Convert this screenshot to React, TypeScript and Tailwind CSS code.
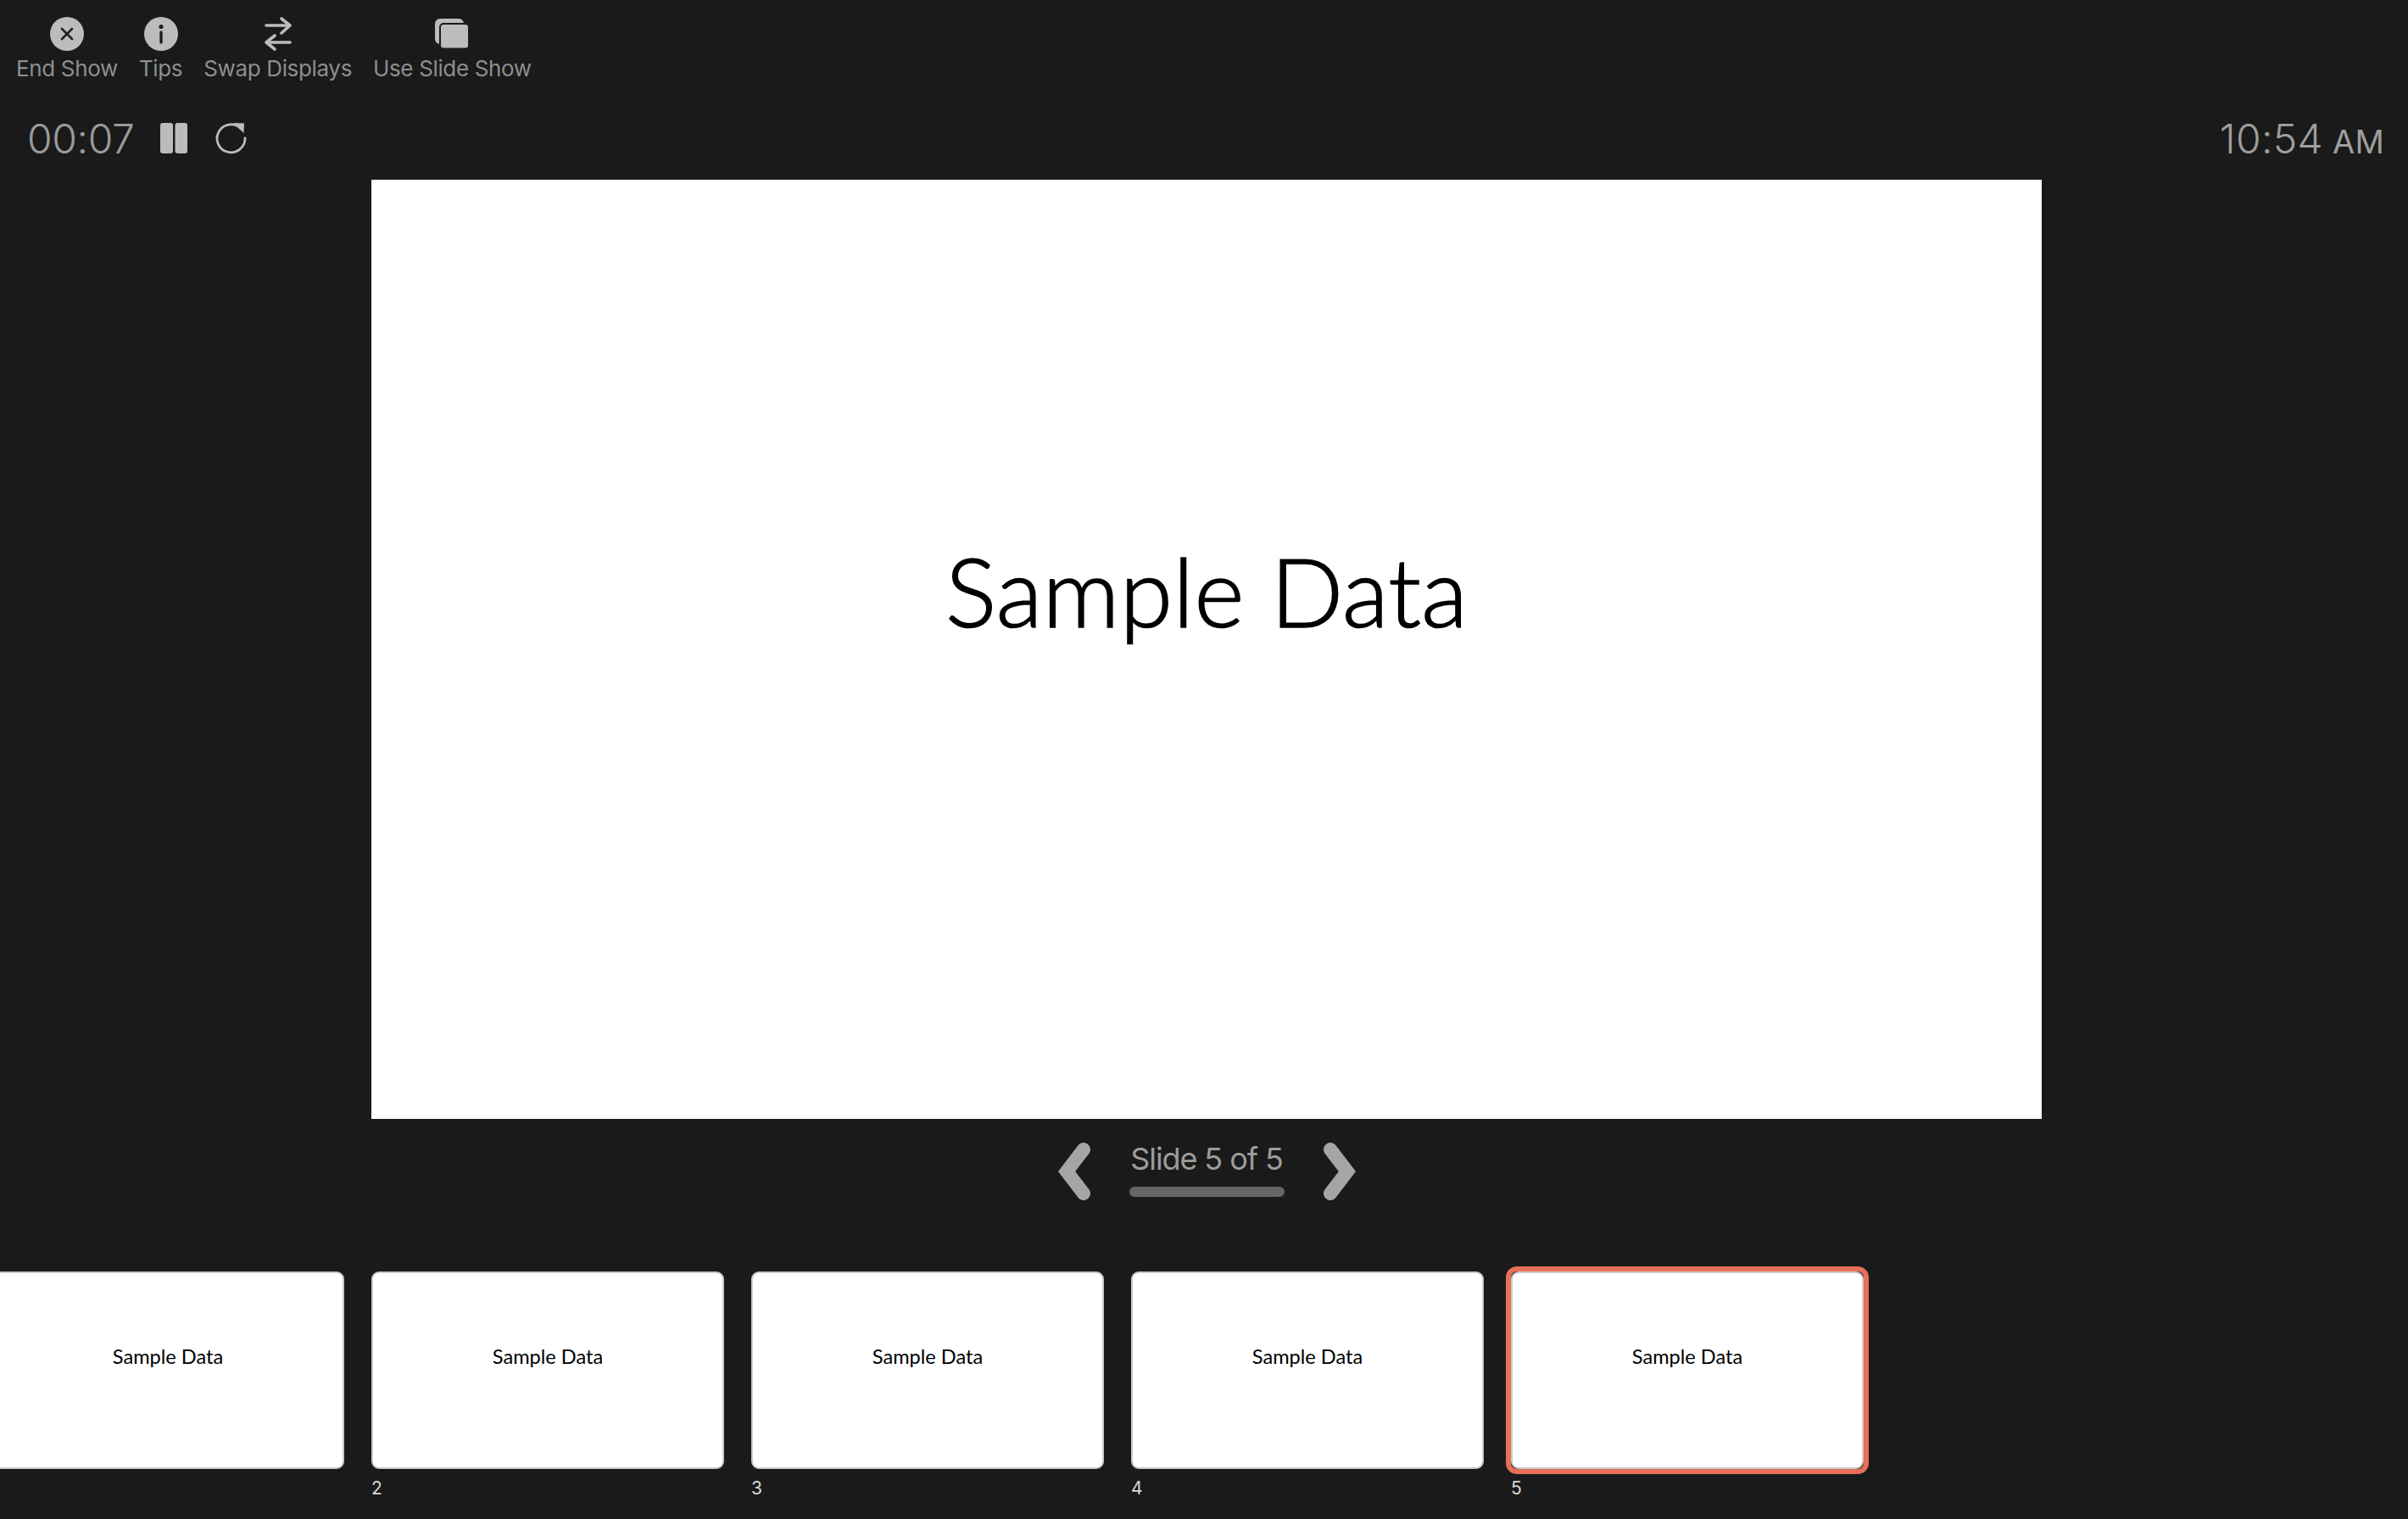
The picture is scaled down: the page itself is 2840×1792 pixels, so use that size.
const Thumb = ({ n, active }: { n?: number; active?: boolean }) => (
  <div className="w-[416px] shrink-0">
    <div className="relative h-[233px] bg-white border-2 border-[#cbcbcb] rounded-[9px] flex items-center justify-center">
      <span className="font-['Lato',sans-serif] text-[23.6px] leading-none text-black mb-[31px]">Sample Data</span>
      {active && <div className="absolute -inset-x-[8px] -inset-y-[8px] border-[6.5px] border-[#e8705a] rounded-[13px]" />}
    </div>
    <div className="mt-[9px] h-[30px] font-['Inter',sans-serif] text-[21px] leading-[28px] text-[#d8d8d8]">{n}</div>
  </div>
);

const ToolItem = ({ label, icon }: { label: string; icon: React.ReactNode }) => (
  <div className="flex flex-col items-center">
    <div className="h-[40px] flex items-center justify-center">{icon}</div>
    <span className="mt-[5px] font-['Inter',sans-serif] text-[26px] leading-[32px] tracking-[-0.35px] text-[#8e8e8e] whitespace-nowrap">{label}</span>
  </div>
);

const Chevron = ({ right }: { right?: boolean }) => (
  <svg width="38" height="68" viewBox="0 0 38 68" className={right ? "rotate-180" : ""}>
    <path d="M30 8 L10 34 L30 60" fill="none" stroke="#a5a5a5" strokeWidth="16" strokeLinecap="round" strokeLinejoin="miter" />
  </svg>
);

export default function App() {
  return (
    <div className="w-[2840px] h-[1792px] bg-[#1a1a1a] overflow-hidden flex flex-col">
      <div className="flex items-start gap-[25px] pl-[19px] pt-[20px] h-[125px]">
        <ToolItem
          label="End Show"
          icon={
            <svg width="40" height="40" viewBox="0 0 40 40">
              <circle cx="20" cy="20" r="20" fill="#bcbcbc" />
              <path d="M14 14 L26 26 M26 14 L14 26" stroke="#1f1f1f" strokeWidth="2.6" strokeLinecap="round" />
            </svg>
          }
        />
        <ToolItem
          label="Tips"
          icon={
            <svg width="40" height="40" viewBox="0 0 40 40">
              <circle cx="20" cy="20" r="20" fill="#bcbcbc" />
              <circle cx="20" cy="11.5" r="2.6" fill="#1f1f1f" />
              <path d="M20 18 V30" stroke="#1f1f1f" strokeWidth="3.4" strokeLinecap="round" />
            </svg>
          }
        />
        <ToolItem
          label="Swap Displays"
          icon={
            <svg width="32" height="40" viewBox="0 0 32 40">
              <path d="M2 10 H29 M20 2 L30 10 L20 19 M30 30 H3 M12 22 L2 30 L12 38" fill="none" stroke="#bcbcbc" strokeWidth="3.6" strokeLinecap="round" strokeLinejoin="round" />
            </svg>
          }
        />
        <ToolItem
          label="Use Slide Show"
          icon={
            <svg width="40" height="36" viewBox="0 0 40 36">
              <rect x="0" y="0" width="34" height="30" rx="6" fill="#bcbcbc" />
              <rect x="6" y="6" width="34" height="29.5" rx="4" fill="#bcbcbc" stroke="#1a1a1a" strokeWidth="2" />
            </svg>
          }
        />
      </div>

      <div className="flex items-center justify-between h-[87px] pl-[32px] pr-[28px] pb-[12px]">
        <div className="flex items-center">
          <span className="font-['Inter',sans-serif] text-[48px] font-light leading-none tracking-[-0.4px] text-[#9b9b9b] w-[157px] pt-[3px]">00:07</span>
          <svg width="32" height="36" viewBox="0 0 32 36">
            <rect x="0" y="0" width="15" height="36" rx="3" fill="#bcbcbc" />
            <rect x="17.5" y="0" width="14.5" height="36" rx="3" fill="#bcbcbc" />
          </svg>
          <svg width="38" height="38" viewBox="0 0 38 38" className="ml-[33px]">
            <path d="M31 8.5 A16.5 16.5 0 1 0 35 19" fill="none" stroke="#bcbcbc" strokeWidth="2.8" strokeLinecap="round" />
            <path d="M21 1 L34 1.5 L33.5 13 Z" fill="#bcbcbc" />
          </svg>
        </div>
        <div className="font-['Inter',sans-serif] text-[#9e9e9e] flex items-baseline gap-[11px] leading-none pt-[3px]">
          <span className="font-light text-[48px] tracking-[0.3px]">10:54</span>
          <span className="text-[38px] tracking-[0.2px]">AM</span>
        </div>
      </div>

      <div className="ml-[438px] w-[1970px]">
        <div className="h-[1108px] bg-white flex items-center justify-center">
          <span className="font-['Lato',sans-serif] font-light text-[113px] tracking-[0.2px] leading-none text-black mb-[140px] [-webkit-text-stroke:1.6px_black]">Sample Data</span>
        </div>
        <div className="flex justify-center gap-[46px] pt-[28px] h-[180px] items-start">
          <Chevron />
          <div className="flex flex-col items-center w-[183px]">
            <span className="font-['Inter',sans-serif] text-[36px] leading-[44px] tracking-[-1.1px] text-[#9c9c9c] whitespace-nowrap mt-[-3px]">Slide 5 of 5</span>
            <div className="mt-[11px] w-full h-[12px] rounded-full bg-[#666666]" />
          </div>
          <Chevron right />
        </div>
      </div>

      <div className="flex gap-[32px] ml-[-10px]">
        <Thumb />
        <Thumb n={2} />
        <Thumb n={3} />
        <Thumb n={4} />
        <Thumb n={5} active />
      </div>
    </div>
  );
}
